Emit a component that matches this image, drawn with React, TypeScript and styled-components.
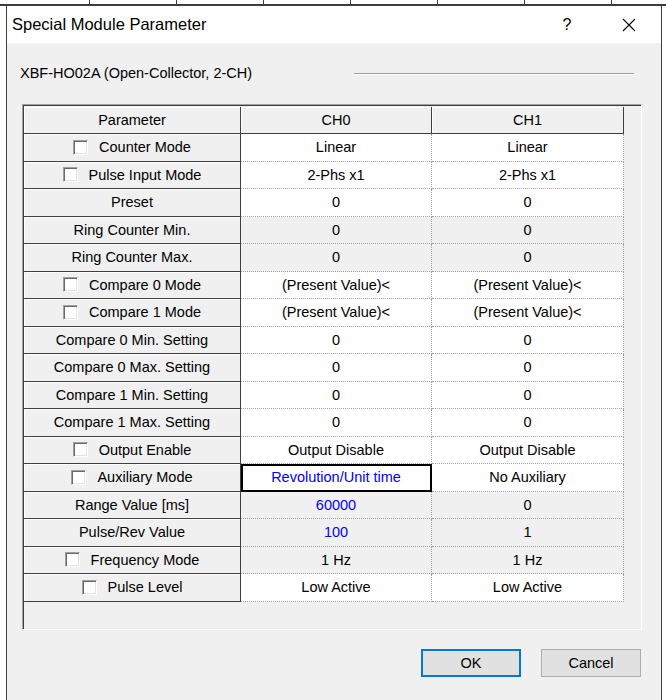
import { Fragment } from "react";
import styled, { createGlobalStyle } from "styled-components";

const GlobalStyle = createGlobalStyle`
    html, body {
        margin: 0;
        padding: 0;
        background: #ffffff;
    }
    body {
        font-family: "Liberation Sans", Arial, sans-serif;
        color: #000000;
    }
`

const Page = styled.div`
    width: 666px;
    height: 700px;
    overflow: hidden;
    display: flex;
    flex-direction: column;
    background: #ffffff;
`

// the window behind the dialog peeks out at the very top
const BackdropStrip = styled.div`
    flex: none;
    height: 4px;
    border-bottom: 2px solid #3c3c3c;
    background-image: repeating-linear-gradient(90deg, transparent 0 86px, #3c3c3c 86px 87px);
    background-position: 3px 0;
`

const Window = styled.div`
    flex: 1;
    margin-left: 6px;
    width: 656px;
    box-sizing: border-box;
    border-left: 1px solid #3f3f3f;
    border-right: 1px solid #3f3f3f;
    background: #f0f0f0;
    display: flex;
    flex-direction: column;
`

const TitleBar = styled.div`
    flex: none;
    height: 37px;
    background: #ffffff;
    display: flex;
    align-items: center;
    padding-left: 5px;
    padding-right: 17px;
`

const Title = styled.span`
    font-size: 16.5px;
    flex: 1;
`

const CaptionButton = styled.span`
    width: 30px;
    height: 30px;
    display: flex;
    align-items: center;
    justify-content: center;
    font-size: 16px;
    margin-left: ${(props: { $gap: number }) => props.$gap}px;
`

const Body = styled.div`
    flex: 1;
    padding-top: 19px;
    display: flex;
    flex-direction: column;
`

const GroupHeader = styled.div`
    height: 22px;
    display: flex;
    align-items: center;
    padding-left: 13px;
    font-size: 14.5px;
`

const GroupRule = styled.span`
    margin-left: auto;
    margin-right: 27px;
    width: 280px;
    height: 1px;
    background: #a0a0a0;
    box-shadow: 0 1px 0 #ffffff;
`

const GridFrame = styled.div`
    margin: 20px 0 0 15px;
    width: 620px;
    height: 526px;
    box-sizing: border-box;
    border: 1px solid;
    border-color: #a0a0a0 #ffffff #ffffff #a0a0a0;
    box-shadow: inset 1px 1px 0 #404040;
    padding: 2px 0 0 1px;
`

const Grid = styled.div`
    display: grid;
    grid-template-columns: 217px 191px 192px;
    grid-template-rows: 27px repeat(17, 27.5px);
    font-size: 14.5px;
`

const HeadCell = styled.div`
    box-sizing: border-box;
    display: flex;
    align-items: center;
    justify-content: center;
    gap: 11px;
    background: #f0f0f0;
    border-right: 1px solid #404040;
    border-bottom: 1px solid #404040;
    box-shadow: inset 1px 1px 0 #ffffff;
    white-space: nowrap;
`

const DataCell = styled.div<{ $shaded: boolean; $blue: boolean; $selected: boolean }>`
    box-sizing: border-box;
    display: flex;
    align-items: center;
    justify-content: center;
    white-space: nowrap;
    background: ${(p) => (p.$shaded ? "#f0f0f0" : "#ffffff")};
    color: ${(p) => (p.$blue ? "#0000ff" : "#000000")};
    border-right: 1px dotted #a0a0a0;
    border-bottom: 1px dotted #a0a0a0;
    outline: ${(p) => (p.$selected ? "2px solid #000000" : "none")};
    outline-offset: -2px;
`

const CheckBox = styled.span`
    flex: none;
    width: 15px;
    height: 15px;
    box-sizing: border-box;
    background: #ffffff;
    border: 1px solid;
    border-color: #a0a0a0 #ffffff #ffffff #a0a0a0;
    box-shadow: inset 1px 1px 0 #696969, inset -1px -1px 0 #e3e3e3;
`

const ButtonRow = styled.div`
    display: flex;
    justify-content: flex-end;
    gap: 20px;
    margin-top: 19px;
    padding-right: 20px;
`

const DialogButton = styled.button<{ $default: boolean }>`
    width: 100px;
    height: 28px;
    box-sizing: border-box;
    background: #e1e1e1;
    border: ${(p) => (p.$default ? "2px solid #0078d7" : "1px solid #adadad")};
    font-family: "Liberation Sans", Arial, sans-serif;
    font-size: 14.5px;
    color: #000000;
    padding: 0;
`

interface Row {
    label: string
    check?: boolean
    shaded?: boolean
    ch0: string
    ch1: string
    blue0?: boolean
    selected0?: boolean
}

const rows: Row[] = [
    { label: "Counter Mode", check: true, ch0: "Linear", ch1: "Linear" },
    { label: "Pulse Input Mode", check: true, ch0: "2-Phs x1", ch1: "2-Phs x1" },
    { label: "Preset", ch0: "0", ch1: "0" },
    { label: "Ring Counter Min.", shaded: true, ch0: "0", ch1: "0" },
    { label: "Ring Counter Max.", shaded: true, ch0: "0", ch1: "0" },
    { label: "Compare 0 Mode", check: true, ch0: "(Present Value)<", ch1: "(Present Value)<" },
    { label: "Compare 1 Mode", check: true, ch0: "(Present Value)<", ch1: "(Present Value)<" },
    { label: "Compare 0 Min. Setting", ch0: "0", ch1: "0" },
    { label: "Compare 0 Max. Setting", ch0: "0", ch1: "0" },
    { label: "Compare 1 Min. Setting", ch0: "0", ch1: "0" },
    { label: "Compare 1 Max. Setting", ch0: "0", ch1: "0" },
    { label: "Output Enable", check: true, ch0: "Output Disable", ch1: "Output Disable" },
    { label: "Auxiliary Mode", check: true, ch0: "Revolution/Unit time", ch1: "No Auxiliary", blue0: true, selected0: true },
    { label: "Range Value [ms]", shaded: true, ch0: "60000", ch1: "0", blue0: true },
    { label: "Pulse/Rev Value", shaded: true, ch0: "100", ch1: "1", blue0: true },
    { label: "Frequency Mode", check: true, shaded: true, ch0: "1 Hz", ch1: "1 Hz" },
    { label: "Pulse Level", check: true, ch0: "Low Active", ch1: "Low Active" },
]

const CloseIcon = () => (
    <svg width="14" height="14" viewBox="0 0 14 14">
        <path d="M1 1 L13 13 M13 1 L1 13" stroke="#000" strokeWidth="1.1" fill="none" />
    </svg>
)

const App = () => {
    return (
        <>
            <GlobalStyle />
            <Page>
                <BackdropStrip />
                <Window>
                    <TitleBar>
                        <Title>Special Module Parameter</Title>
                        <CaptionButton $gap={0}>?</CaptionButton>
                        <CaptionButton $gap={32}><CloseIcon /></CaptionButton>
                    </TitleBar>
                    <Body>
                        <GroupHeader>
                            XBF-HO02A (Open-Collector, 2-CH)
                            <GroupRule />
                        </GroupHeader>
                        <GridFrame>
                            <Grid>
                                <HeadCell>Parameter</HeadCell>
                                <HeadCell>CH0</HeadCell>
                                <HeadCell>CH1</HeadCell>
                                {rows.map((row) => (
                                    <Fragment key={row.label}>
                                        <HeadCell>
                                            {row.check && <CheckBox />}
                                            {row.label}
                                        </HeadCell>
                                        <DataCell $shaded={!!row.shaded} $blue={!!row.blue0} $selected={!!row.selected0}>
                                            {row.ch0}
                                        </DataCell>
                                        <DataCell $shaded={!!row.shaded} $blue={false} $selected={false}>
                                            {row.ch1}
                                        </DataCell>
                                    </Fragment>
                                ))}
                            </Grid>
                        </GridFrame>
                        <ButtonRow>
                            <DialogButton $default={true}>OK</DialogButton>
                            <DialogButton $default={false}>Cancel</DialogButton>
                        </ButtonRow>
                    </Body>
                </Window>
            </Page>
        </>
    )
}

export default App;
